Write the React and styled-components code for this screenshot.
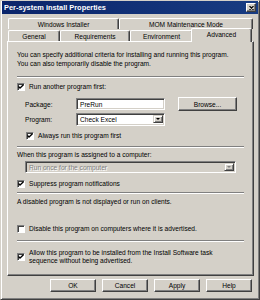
import React from 'react';
import styled, { createGlobalStyle } from 'styled-components';

const GlobalStyle = createGlobalStyle`
  html, body {
    margin: 0;
    padding: 0;
    background: #d4d0c8;
  }
  body {
    font-family: "Liberation Sans", Arial, sans-serif;
    font-size: 6.6px;
    color: #000;
  }
`;

const Window = styled.div`
  width: 260px;
  height: 300px;
  box-sizing: border-box;
  background: #d4d0c8;
  border: 1px solid;
  border-color: #d4d0c8 #404040 #404040 #d4d0c8;
  box-shadow: inset 1px 1px #fff, inset -1px -1px #808080;
  padding: 0 1px;
  display: flex;
  flex-direction: column;
`;

const TitleBar = styled.div`
  height: 13px;
  background: linear-gradient(90deg, #0a246a, #183c82);
  display: flex;
  align-items: center;
  justify-content: space-between;
  padding: 0 2px 0 2px;
`;

const Title = styled.span`
  color: #fff;
  font-weight: bold;
  font-size: 7.4px;
`;

const CloseButton = styled.div`
  width: 8px;
  height: 7px;
  background: #d4d0c8;
  border: 1px solid;
  border-color: #fff #404040 #404040 #fff;
  box-shadow: inset -1px -1px #808080;
  display: flex;
  align-items: center;
  justify-content: center;
`;

const Body = styled.div`
  flex: 1;
  display: flex;
  flex-direction: column;
  padding: 4px 4px 0 5px;
`;

const TabRow = styled.div`
  display: flex;
  align-items: flex-end;
  height: ${p => p.$h}px;
  padding-left: 1px;
`;

const Tab = styled.div`
  width: ${p => p.$w}px;
  height: ${p => (p.$active ? 14 : 11)}px;
  box-sizing: border-box;
  border: 1px solid;
  border-bottom: none;
  border-color: #fff #404040 #fff #fff;
  box-shadow: inset -1px 0 #808080;
  border-radius: 2px 2px 0 0;
  background: #d4d0c8;
  display: flex;
  align-items: ${p => (p.$active ? 'flex-start' : 'center')};
  padding-top: ${p => (p.$active ? 2 : 0)}px;
  justify-content: center;
  white-space: nowrap;
  ${p =>
    p.$active &&
    `
    position: relative;
    z-index: 1;
    margin-left: -2px;
    margin-bottom: -1px;
    width: ${p.$w + 3}px;
  `}
`;

const Panel = styled.div`
  height: 235px;
  box-sizing: border-box;
  border: 1px solid;
  border-color: #fff #404040 #404040 #fff;
  box-shadow: inset -1px -1px #808080;
  padding: 8px 10px 0 9px;
  display: flex;
  flex-direction: column;
`;

const Text = styled.div`
  line-height: 9px;
  margin-top: ${p => p.$mt || 0}px;
  margin-left: ${p => p.$ml || 0}px;
  white-space: nowrap;
`;

const Separator = styled.div`
  height: 0;
  width: 227px;
  border-top: 1px solid #808080;
  border-bottom: 1px solid #fff;
  margin-top: ${p => p.$mt}px;
`;

const CheckRow = styled.label`
  display: flex;
  align-items: center;
  gap: 4px;
  min-height: 9px;
  line-height: 8px;
  white-space: nowrap;
  margin-top: ${p => p.$mt}px;
  margin-left: ${p => p.$ml || 0}px;
`;

const Box = styled.span`
  flex: none;
  width: 8px;
  height: 8px;
  box-sizing: border-box;
  background: #fff;
  border: 1px solid;
  border-color: #808080 #fff #fff #808080;
  box-shadow: inset 1px 1px #404040;
  display: flex;
  align-items: center;
  justify-content: center;
`;

const FieldRow = styled.div`
  display: flex;
  align-items: center;
  height: 14px;
  margin-top: ${p => p.$mt}px;
  padding-left: 8px;
`;

const FieldLabel = styled.span`
  width: 51px;
`;

const Sunken = styled.div`
  width: ${p => p.$w}px;
  height: ${p => p.$h || 12}px;
  box-sizing: border-box;
  background: ${p => (p.$disabled ? '#d4d0c8' : '#fff')};
  color: ${p => (p.$disabled ? '#808080' : '#000')};
  text-shadow: ${p => (p.$disabled ? '1px 1px 0 #fff' : 'none')};
  border: 1px solid;
  border-color: #808080 #fff #fff #808080;
  box-shadow: inset 1px 1px #404040, inset -1px -1px #d4d0c8;
  display: flex;
  align-items: center;
  justify-content: space-between;
  padding: 0 1px 0 3px;
  white-space: nowrap;
  margin-left: ${p => p.$ml || 0}px;
  margin-top: ${p => p.$mt || 0}px;
`;

const DropButton = styled.div`
  width: 10px;
  height: 8px;
  box-sizing: border-box;
  background: #d4d0c8;
  border: 1px solid;
  border-color: #d4d0c8 #404040 #404040 #d4d0c8;
  box-shadow: inset 1px 1px #fff, inset -1px -1px #808080;
  display: flex;
  align-items: center;
  justify-content: center;
`;

const Arrow = styled.span`
  width: 0;
  height: 0;
  border-left: 2px solid transparent;
  border-right: 2px solid transparent;
  border-top: 2px solid ${p => (p.$disabled ? '#808080' : '#000')};
`;

const PushButton = styled.button`
  width: ${p => p.$w}px;
  height: ${p => p.$h || 13}px;
  box-sizing: border-box;
  padding: 0;
  background: #d4d0c8;
  font-family: inherit;
  font-size: 6.6px;
  color: #000;
  border: 1px solid;
  border-color: #fff #404040 #404040 #fff;
  box-shadow: inset -1px -1px #808080;
  margin-left: ${p => p.$ml || 0}px;
`;

const ButtonBar = styled.div`
  display: flex;
  justify-content: flex-end;
  gap: 6px;
  margin-top: 3px;
  padding-right: 2px;
`;

const Check = () => (
  <svg width="6" height="6" viewBox="0 0 6 6">
    <polyline points="0.5,2.5 2,4 5.5,0.8" fill="none" stroke="#000" strokeWidth="1.3" />
  </svg>
);

const CheckBox = ({ checked, children, mt, ml }) => (
  <CheckRow $mt={mt} $ml={ml}>
    <Box>{checked && <Check />}</Box>
    <span>{children}</span>
  </CheckRow>
);

export default function App() {
  return (
    <>
      <GlobalStyle />
      <Window>
        <TitleBar>
          <Title>Per-system install Properties</Title>
          <CloseButton>
            <svg width="5" height="4" viewBox="0 0 5 4">
              <path d="M0.5 0 L4.5 4 M4.5 0 L0.5 4" stroke="#000" strokeWidth="1.1" />
            </svg>
          </CloseButton>
        </TitleBar>
        <Body>
          <TabRow $h={11}>
            <Tab $w={111}>Windows Installer</Tab>
            <Tab $w={134}>MOM Maintenance Mode</Tab>
          </TabRow>
          <TabRow $h={12}>
            <Tab $w={52}>General</Tab>
            <Tab $w={70}>Requirements</Tab>
            <Tab $w={63}>Environment</Tab>
            <Tab $w={58} $active>Advanced</Tab>
          </TabRow>
          <Panel>
            <Text>You can specify additional criteria for installing and running this program.</Text>
            <Text>You can also temporarily disable the program.</Text>
            <Separator $mt={8} />
            <CheckBox checked mt={4}>Run another program first:</CheckBox>
            <FieldRow $mt={6}>
              <FieldLabel>Package:</FieldLabel>
              <Sunken $w={89}>PreRun</Sunken>
              <PushButton $w={59} $h={14} $ml={13}>Browse...</PushButton>
            </FieldRow>
            <FieldRow $mt={1}>
              <FieldLabel>Program:</FieldLabel>
              <Sunken $w={89} $h={13}>
                Check Excel
                <DropButton><Arrow /></DropButton>
              </Sunken>
            </FieldRow>
            <CheckBox checked mt={5} ml={9}>Always run this program first</CheckBox>
            <Separator $mt={6} />
            <Text $mt={2}>When this program is assigned to a computer:</Text>
            <Sunken $w={211} $ml={8} $mt={2} $disabled>
              Run once for the computer
              <DropButton><Arrow $disabled /></DropButton>
            </Sunken>
            <CheckBox checked mt={6}>Suppress program notifications</CheckBox>
            <Separator $mt={4} />
            <Text $mt={3}>A disabled program is not displayed or run on clients.</Text>
            <CheckBox mt={18}>Disable this program on computers where it is advertised.</CheckBox>
            <Separator $mt={7} />
            <CheckBox checked mt={7}>
              Allow this program to be installed from the Install Software task
              <br />
              sequence without being advertised.
            </CheckBox>
          </Panel>
          <ButtonBar>
            <PushButton $w={46}>OK</PushButton>
            <PushButton $w={46}>Cancel</PushButton>
            <PushButton $w={46}>Apply</PushButton>
            <PushButton $w={46}>Help</PushButton>
          </ButtonBar>
        </Body>
      </Window>
    </>
  );
}
